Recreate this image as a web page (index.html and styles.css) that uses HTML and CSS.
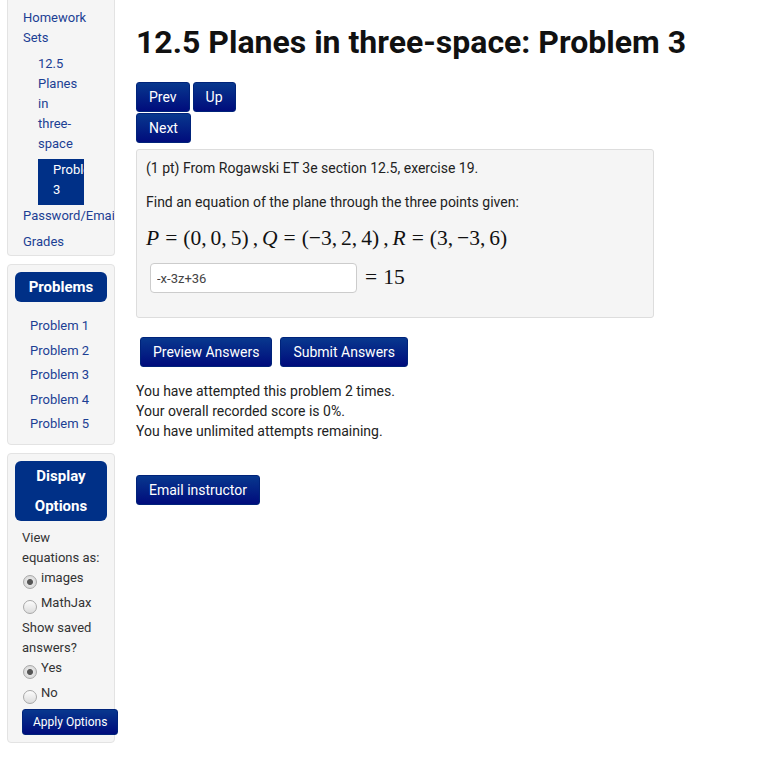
FILE: index.html
```html
<!DOCTYPE html>
<html lang="en">
<head>
  <meta charset="UTF-8" />
  <title>12.5 Planes in three-space: Problem 3</title>
  <link rel="stylesheet" href="styles.css">
</head>
<body>
  <div class="page">
    <div class="sidebar">
      <div class="well site-nav">
        <ul class="nav">
          <li><a href="#">Homework Sets</a>
            <ul class="nav-sub">
              <li><a href="#">12.5 Planes in three-space</a></li>
              <li class="active"><a href="#">Problem 3</a></li>
            </ul>
          </li>
          <li><a href="#">Password/Email</a></li>
          <li><a href="#">Grades</a></li>
        </ul>
      </div>

      <div class="well problems">
        <div class="well-header">Problems</div>
        <ul class="problem-list">
          <li><a href="#">Problem 1</a></li>
          <li><a href="#">Problem 2</a></li>
          <li><a href="#">Problem 3</a></li>
          <li><a href="#">Problem 4</a></li>
          <li><a href="#">Problem 5</a></li>
        </ul>
      </div>

      <div class="well">
        <div class="well-header">Display Options</div>
        <form class="options">
          <div class="opt-label">View equations as:</div>
          <label class="radio"><input type="radio" name="displayMode" checked> images</label>
          <label class="radio"><input type="radio" name="displayMode"> MathJax</label>
          <div class="opt-label">Show saved answers?</div>
          <label class="radio"><input type="radio" name="showOld" checked> Yes</label>
          <label class="radio"><input type="radio" name="showOld"> No</label>
          <button type="button" class="btn btn-small">Apply Options</button>
        </form>
      </div>
    </div>

    <div class="main">
      <h1>12.5 Planes in three-space: Problem 3</h1>

      <div class="nav-buttons">
        <button class="btn">Prev</button>
        <button class="btn">Up</button>
        <button class="btn">Next</button>
      </div>

      <div class="problem">
        <p>(1 pt) From Rogawski ET 3e section 12.5, exercise 19.</p>
        <p>Find an equation of the plane through the three points given:</p>
        <p class="math">
          <i>P</i><span class="rel">=</span>(0,<span class="sp"></span>0,<span class="sp"></span>5)<span class="sp"></span>,<span class="sp"></span><i>Q</i><span class="rel">=</span>(&minus;3,<span class="sp"></span>2,<span class="sp"></span>4)<span class="sp"></span>,<span class="sp"></span><i>R</i><span class="rel">=</span>(3,<span class="sp"></span>&minus;3,<span class="sp"></span>6)
        </p>
        <div class="answer-row">
          <input class="answer" type="text" value="-x-3z+36">
          <span class="math"><span class="rel">=</span>15</span>
        </div>
      </div>

      <div class="submit-buttons">
        <button class="btn">Preview Answers</button>
        <button class="btn">Submit Answers</button>
      </div>

      <div class="attempts">
        You have attempted this problem 2 times.<br>
        Your overall recorded score is 0%.<br>
        You have unlimited attempts remaining.
      </div>

      <button class="btn">Email instructor</button>
    </div>
  </div>
</body>
</html>
```

FILE: styles.css
```css
body {
  margin: 0;
  font-family: Roboto, "Liberation Sans", sans-serif;
  font-size: 14px;
  line-height: 20px;
  color: #222;
  background: #fff;
}

a {
  color: #1c3f94;
  text-decoration: none;
}

ul {
  list-style: none;
  margin: 0;
  padding: 0;
}

.page {
  display: flex;
  align-items: flex-start;
}

/* left column */
.sidebar {
  width: 108px;
  margin-left: 7px;
  display: flex;
  flex-direction: column;
  gap: 8px;
  flex-shrink: 0;
}

.well {
  background: #f5f5f5;
  border: 1px solid #e3e3e3;
  border-radius: 4px;
  padding: 7px 7px 6px;
}

.well.problems {
  padding-bottom: 7px;
}

.site-nav {
  border-top: 0;
  border-radius: 0 0 4px 4px;
  padding: 8px 0 3px 15px;
  overflow: hidden;
  font-size: 13px;
}

.nav {
  width: 70px;
}

.nav > li + li {
  margin-top: 6px;
}

.nav-sub {
  margin: 6px 0 -5px 15px;
  width: 46px;
}

.nav-sub li.active {
  margin-top: 5px;
  background: #003087;
  padding: 1px 0 5px;
  overflow: hidden;
}

.nav-sub li.active a {
  display: block;
  color: #fff;
  padding-left: 15px;
}

.well-header {
  background: #003087;
  color: #fff;
  border-radius: 6px;
  font-weight: bold;
  font-size: 15px;
  line-height: 30px;
  text-align: center;
}

.problem-list {
  margin-top: 12px;
  padding-left: 15px;
  font-size: 13px;
}

.problem-list li {
  padding: 2px 0 2.5px;
}

.options {
  margin-top: 7px;
  padding-left: 7px;
  font-size: 13px;
  color: #333;
}

.radio {
  display: flex;
  align-items: flex-start;
  margin-bottom: 4px;
}

.radio input {
  appearance: none;
  -webkit-appearance: none;
  width: 14px;
  height: 14px;
  margin: 7px 4px 0 1px;
  border: 1px solid #a8a8a8;
  border-radius: 50%;
  background: linear-gradient(#fcfcfc, #dcdcdc);
  flex-shrink: 0;
}

.radio input:checked {
  background: radial-gradient(circle, #555 0, #555 2.5px, #e4e4e4 3.5px, #d0d0d0 100%);
}

/* buttons */
.btn {
  font-family: Roboto, "Liberation Sans", sans-serif;
  font-size: 14px;
  height: 30px;
  padding: 0 12px;
  color: #fff;
  background: linear-gradient(#08388e, #000c7c);
  border: 1px solid #00237a;
  border-radius: 3px;
  white-space: nowrap;
  cursor: pointer;
}

.btn-small {
  font-size: 12px;
  height: 26px;
  padding: 0 10px;
  margin: 1px 0 1px;
}

/* main column */
.main {
  margin-left: 21px;
  width: 600px;
}

h1 {
  font-size: 32px;
  line-height: 36px;
  font-weight: bold;
  color: #111;
  margin: 24px 0 22px;
}

.nav-buttons {
  width: 104px;
  display: flex;
  flex-wrap: wrap;
  gap: 1px 3px;
}

.problem {
  width: 498px;
  margin-top: 6px;
  background: #f5f5f5;
  border: 1px solid #ddd;
  border-radius: 3px;
  padding: 8px 9px 24px;
}

.problem p {
  margin: 0 0 14px;
}

.math {
  font-family: "Liberation Serif", "DejaVu Serif", serif;
  font-size: 21.5px;
  color: #111;
}

p.math {
  margin: 0 0 13px;
  line-height: 24px;
}

.math i {
  font-style: italic;
}

.rel {
  margin: 0 6px;
}

.sp {
  display: inline-block;
  width: 4px;
}

.answer-row {
  display: flex;
  align-items: center;
  padding-left: 4px;
}

.answer {
  width: 193px;
  height: 28px;
  padding: 0 6px;
  border: 1px solid #ccc;
  border-radius: 4px;
  background: #fff;
  font-family: Roboto, "Liberation Sans", sans-serif;
  font-size: 13px;
  color: #444;
}

.answer-row .math {
  margin-left: 2px;
  margin-top: -3px;
}

.submit-buttons {
  display: flex;
  gap: 8px;
  margin: 19px 0 14px 4px;
}

.attempts {
  margin-bottom: 34px;
}
```
